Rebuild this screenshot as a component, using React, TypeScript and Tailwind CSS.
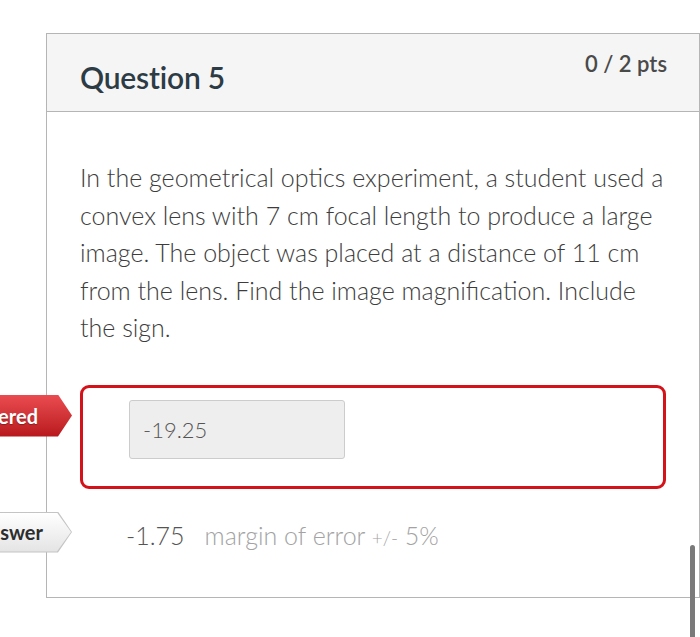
import React from "react";

export default function App() {
  return (
    <div className="relative w-[700px] h-[637px] overflow-hidden bg-white font-['Lato','Liberation_Sans',sans-serif]">
      <div className="pt-[33px] pl-[46px]">
        <div className="w-[654px] border border-[#b5b5b5]">
          {/* header */}
          <div className="h-[78px] bg-[#f5f5f5] border-b border-[#b5b5b5] flex justify-between pl-[33px] pr-[32px]">
            <h2 className="pt-[24px] text-[30px] leading-[38px] font-semibold text-[#2d3b45] tracking-[-0.2px]">
              Question 5
            </h2>
            <div className="pt-[16px] text-[22px] leading-[28px] font-semibold text-[#4a4a4a]">
              0 / 2 pts
            </div>
          </div>
          {/* body */}
          <div className="pl-[33px] pr-[30px] pt-[47px] pb-[44px]">
            <p className="text-[25px] leading-[37.5px] font-light text-[#3d3d3d]">
              In the geometrical optics experiment, a student used a convex lens with 7 cm focal length to produce a large
              image. The object was placed at a distance of 11 cm from the lens. Find the image magnification. Include
              the sign.
            </p>

            <div className="relative mt-[38px]">
              <div className="absolute left-[-208px] top-[10px] w-[200px] h-[42px] bg-gradient-to-b from-[#ea4b50] to-[#b8161c] [clip-path:polygon(0_0,calc(100%-14px)_0,100%_50%,calc(100%-14px)_100%,0_100%)] flex items-center justify-end pr-[34px]">
                <span className="whitespace-nowrap text-white text-[20px] font-bold leading-none [text-shadow:0_1px_1px_rgba(0,0,0,0.3)]">
                  You Answered
                </span>
              </div>
              <div className="w-[586px] h-[104px] border-[3px] border-[#d3121a] rounded-[9px] pl-[46px] pt-[12px]">
                <div className="w-[216px] h-[59px] bg-[#eeeeee] border border-[#cccccc] rounded-[3px] flex items-center pl-[13px] text-[22px] font-light text-[#555]">
                  -19.25
                </div>
              </div>
            </div>

            <div className="relative mt-[23px] h-[41px] flex items-center pl-[46px]">
              <div className="absolute left-[-208px] top-[0px] w-[200px] h-[41px] bg-[#c4c4c4] [clip-path:polygon(0_0,calc(100%-14px)_0,100%_50%,calc(100%-14px)_100%,0_100%)]">
                <div className="absolute inset-[1px] bg-gradient-to-b from-[#ffffff] to-[#e4e4e4] [clip-path:polygon(0_0,calc(100%-14px)_0,100%_50%,calc(100%-14px)_100%,0_100%)] flex items-center justify-end pr-[28px]">
                  <span className="whitespace-nowrap text-[#2d2d2d] text-[20px] font-bold leading-none">Correct Answer</span>
                </div>
              </div>
              <span className="pt-[7px] text-[25px] font-light text-[#555] leading-none">-1.75</span>
              <span className="pt-[7px] ml-[20px] text-[25px] font-light text-[#a3a3a3] leading-none whitespace-nowrap">
                margin of error <span className="text-[19px]">+/-</span> 5%
              </span>
            </div>
          </div>
        </div>
      </div>
      {/* scrollbar */}
      <div className="absolute left-[690px] top-[545px] w-[5px] h-[100px] rounded-full bg-[#7a7a7a]" />
    </div>
  );
}
